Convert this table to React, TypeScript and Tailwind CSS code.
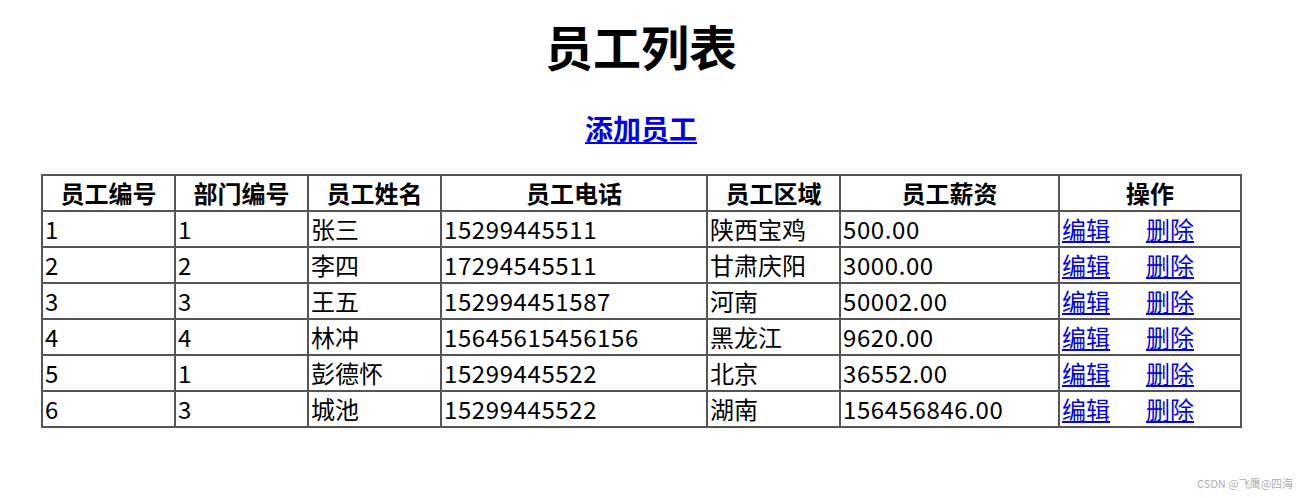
const employees = [
  { id: '1', dept: '1', name: '张三', phone: '15299445511', area: '陕西宝鸡', salary: '500.00' },
  { id: '2', dept: '2', name: '李四', phone: '17294545511', area: '甘肃庆阳', salary: '3000.00' },
  { id: '3', dept: '3', name: '王五', phone: '152994451587', area: '河南', salary: '50002.00' },
  { id: '4', dept: '4', name: '林冲', phone: '15645615456156', area: '黑龙江', salary: '9620.00' },
  { id: '5', dept: '1', name: '彭德怀', phone: '15299445522', area: '北京', salary: '36552.00' },
  { id: '6', dept: '3', name: '城池', phone: '15299445522', area: '湖南', salary: '156456846.00' },
]

const headers = ['员工编号', '部门编号', '员工姓名', '员工电话', '员工区域', '员工薪资', '操作']
const widths = ['w-[133px]', 'w-[133px]', 'w-[133px]', 'w-[266px]', 'w-[133px]', 'w-[219px]', 'w-[182px]']

export default function App() {
  return (
    <div className="relative w-[1282px] h-[498px] bg-white text-black font-['Noto_Sans_CJK_SC','Microsoft_YaHei',sans-serif]">
      <h1 className="pt-[17px] text-center text-[48px] font-bold leading-[56px]">员工列表</h1>
      <div className="mt-[37px] text-center">
        <a href="#" className="text-[28px] font-bold leading-[36px] text-[#0000ee] underline">
          添加员工
        </a>
      </div>
      <table className="mt-[28px] ml-[41px] w-[1199px] table-fixed border-collapse border-2 border-[#555] text-[24px]">
        <colgroup>
          {widths.map((w, i) => (
            <col key={i} className={w} />
          ))}
        </colgroup>
        <thead>
          <tr className="h-[36px]">
            {headers.map(h => (
              <th key={h} className="border-2 border-[#555] p-0 text-center font-bold leading-[32px]">
                {h}
              </th>
            ))}
          </tr>
        </thead>
        <tbody>
          {employees.map(e => (
            <tr key={e.id} className="h-[36px]">
              <td className="border-2 border-[#555] px-[2px] py-0 leading-[32px]">{e.id}</td>
              <td className="border-2 border-[#555] px-[2px] py-0 leading-[32px]">{e.dept}</td>
              <td className="border-2 border-[#555] px-[2px] py-0 leading-[32px]">{e.name}</td>
              <td className="border-2 border-[#555] px-[2px] py-0 leading-[32px] tracking-[0.6px]">{e.phone}</td>
              <td className="border-2 border-[#555] px-[2px] py-0 leading-[32px]">{e.area}</td>
              <td className="border-2 border-[#555] px-[2px] py-0 leading-[32px] tracking-[0.6px]">{e.salary}</td>
              <td className="border-2 border-[#555] px-[2px] py-0 leading-[32px]">
                <a href="#" className="text-[#0000ee] underline">编辑</a>
                <a href="#" className="ml-[36px] text-[#0000ee] underline">删除</a>
              </td>
            </tr>
          ))}
        </tbody>
      </table>
      <div className="absolute left-[1197px] top-[476px] text-[11px] leading-[14px] text-[#b0b0b0] whitespace-nowrap">
        CSDN @飞鹰@四海
      </div>
    </div>
  )
}
